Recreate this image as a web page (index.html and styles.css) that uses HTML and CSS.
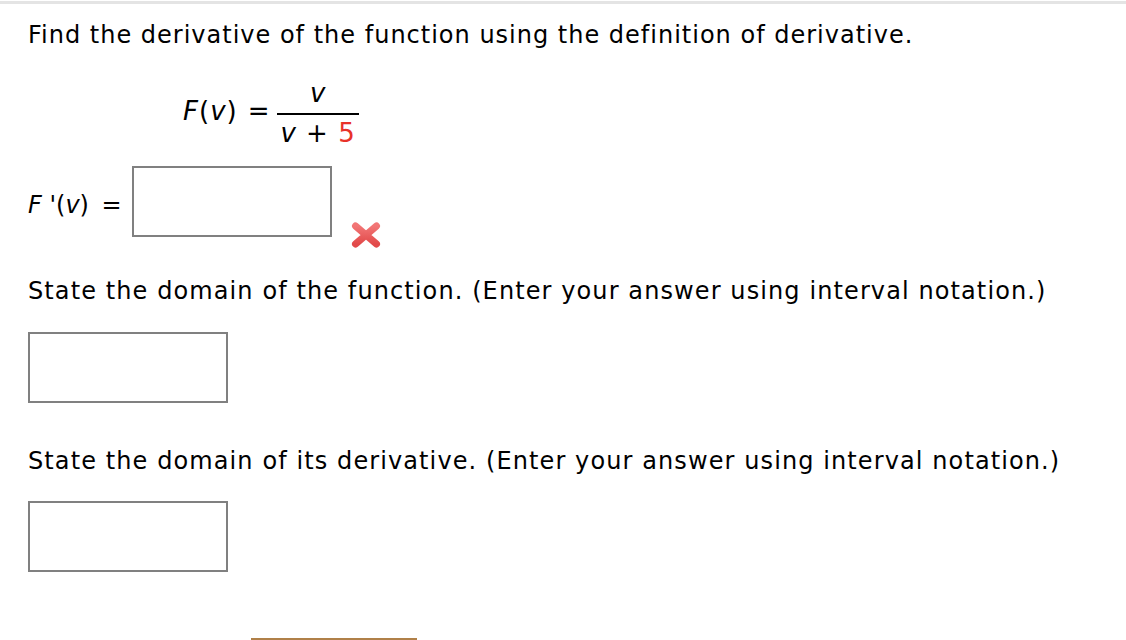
FILE: index.html
```html
<!DOCTYPE html>
<html>
<head>
<meta charset="utf-8">
<link rel="stylesheet" href="styles.css">
</head>
<body>
<div class="topline"></div>
<div class="content">
  <p class="q q1">Find the derivative of the function using the definition of derivative.</p>
  <div class="formula">
    <span class="lhs"><span class="mi">F</span>(<span class="mi">v</span>)</span>
    <span class="eq">=</span>
    <span class="frac">
      <span class="num"><span class="mi">v</span></span>
      <span class="den"><span class="mi">v</span> + <span class="red">5</span></span>
    </span>
  </div>
  <div class="answer-row">
    <span class="label"><span class="mi">F</span> '(<span class="mi">v</span>) <span class="eq2">=</span></span>
    <span class="box box-wide"></span>
    <svg class="xmark" width="30" height="26" viewBox="0 0 30 26">
      <defs>
        <linearGradient id="g" x1="0" y1="0" x2="0" y2="1">
          <stop offset="0" stop-color="#f27676"/>
          <stop offset="1" stop-color="#e24a4a"/>
        </linearGradient>
      </defs>
      <path d="M4.5 4 L25.5 22 M25.5 4 L4.5 22" stroke="url(#g)" stroke-width="7" stroke-linecap="round"/>
    </svg>
  </div>
  <p class="q q2">State the domain of the function. (Enter your answer using interval notation.)</p>
  <span class="box"></span>
  <p class="q q3">State the domain of its derivative. (Enter your answer using interval notation.)</p>
  <span class="box"></span>
  <div class="bottomline"></div>
</div>
</body>
</html>
```
FILE: styles.css
```css
html, body {
  margin: 0;
  padding: 0;
  background: #ffffff;
}
body {
  font-family: "DejaVu Sans", Verdana, sans-serif;
  color: #000;
  font-size: 24px;
}
.topline {
  margin-top: 1px;
  height: 3px;
  background: #e4e4e4;
}
.content {
  padding-left: 28px;
}
.q {
  margin: 0;
  line-height: 30px;
  letter-spacing: 1.1px;
}
.q1 {
  padding-top: 16px;
  letter-spacing: 1px;
}
.formula {
  display: flex;
  align-items: flex-start;
  margin-left: 155px;
  margin-top: 29px;
  font-size: 26px;
  line-height: 28px;
  letter-spacing: 1px;
}
.lhs {
  margin-top: 18px;
}
.mi {
  font-style: italic;
}
.eq {
  margin: 18px 7px 0 10px;
}
.frac {
  display: inline-flex;
  flex-direction: column;
  align-items: stretch;
}
.num {
  padding: 0 2px 6px;
  border-bottom: 2px solid #000;
  text-align: center;
}
.den {
  padding: 4px 3px 0;
  text-align: center;
}
.red {
  color: #e8322a;
}
.answer-row {
  display: flex;
  align-items: flex-start;
  margin-top: 19px;
}
.label {
  margin-top: 25px;
  line-height: 28px;
}
.eq2 {
  margin-left: 5px;
}
.box {
  display: block;
  box-sizing: border-box;
  width: 200px;
  height: 71px;
  border: 2px solid #808080;
  background: #fff;
}
.box-wide {
  margin-left: 10px;
}
.xmark {
  margin-left: 19px;
  margin-top: 56px;
}
.q2 {
  margin-top: 28px;
  margin-bottom: 26px;
}
.q3 {
  margin-top: 43px;
  margin-bottom: 25px;
}
.bottomline {
  margin-top: 66px;
  margin-left: 223px;
  width: 166px;
  height: 2px;
  background: #b08048;
}
```
